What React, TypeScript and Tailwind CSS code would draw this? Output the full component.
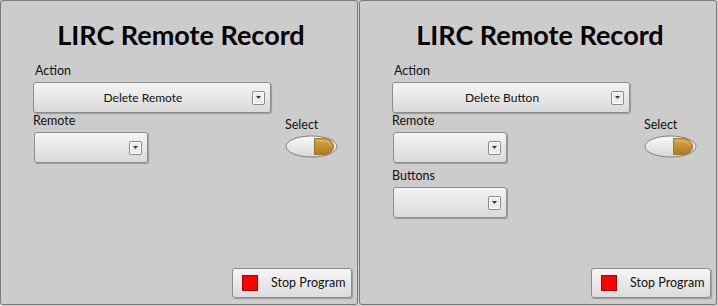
import type { ReactNode } from 'react'

const font = { fontFamily: 'Lato, "Noto Sans", "Liberation Sans", sans-serif' }

function ArrowBox() {
  return (
    <span className="flex h-[14px] w-[13px] items-center justify-center rounded-[2px] border border-[#8a8a8a] bg-[#ececec] shadow-[inset_0_0_0_1px_#ffffff]">
      <svg width="5" height="3" viewBox="0 0 5 3">
        <path d="M0 0 H5 L2.5 3 Z" fill="#3a3a3a" />
      </svg>
    </span>
  )
}

function Ring({ width, text }: { width: string; text?: string }) {
  return (
    <div
      className={`${width} flex h-[31px] items-center rounded-[3px] border border-[#8d8d8d] bg-gradient-to-b from-[#f4f4f4] to-[#dadada] pr-[5px] shadow-[1px_1px_1px_rgba(0,0,0,0.25)]`}
    >
      <span className="flex-1 text-center text-[12px] text-[#111]">{text}</span>
      <ArrowBox />
    </div>
  )
}

function Label({ children, className = '' }: { children: ReactNode; className?: string }) {
  return <div className={`h-4 text-[12.5px] leading-4 text-[#111] ${className}`}>{children}</div>
}

function Toggle() {
  return (
    <svg width="53" height="23" viewBox="0 0 53 23">
      <defs>
        <linearGradient id="tg" x1="0" y1="0" x2="0" y2="1">
          <stop offset="0" stopColor="#f8f8f8" />
          <stop offset="1" stopColor="#d8d8d8" />
        </linearGradient>
        <linearGradient id="gd" x1="0" y1="0" x2="0" y2="1">
          <stop offset="0" stopColor="#d8a545" />
          <stop offset="1" stopColor="#b07a22" />
        </linearGradient>
      </defs>
      <ellipse cx="26.5" cy="11.5" rx="25.5" ry="10.5" fill="url(#tg)" stroke="#7d7d7d" />
      <path d="M29.5 3.5 H38 C45 3.5 48.5 7.5 48.5 11.5 C48.5 15.5 45 19.5 38 19.5 H29.5 Z" fill="url(#gd)" stroke="#8a6420" strokeWidth="0.8" />
      <path d="M31.5 6 H38 C42.5 6 45 8.5 45.5 11" fill="none" stroke="#e6be6e" strokeWidth="1" />
    </svg>
  )
}

function Panel({ action, buttons }: { action: string; buttons?: boolean }) {
  return (
    <div className="flex h-[305px] w-[358px] shrink-0 flex-col rounded-[3px] border border-[#7b7b7b] bg-[#cccccc]">
      <h1 className="mt-[17px] pl-[4px] text-center text-[27px] font-bold leading-[34px] text-black">LIRC Remote Record</h1>
      <div className="mt-[11px] flex">
        <div className="flex w-[283px] shrink-0 flex-col pl-[32px]">
          <Label className="pl-[2px]">Action</Label>
          <div className="mt-[3px]">
            <Ring width="w-[238px]" text={action} />
          </div>
          <Label>Remote</Label>
          <div className="mt-[3px] pl-[1px]">
            <Ring width="w-[114px]" />
          </div>
          {buttons ? (
            <>
              <Label className="mt-[5px]">Buttons</Label>
              <div className="mt-[3px] pl-[1px]">
                <Ring width="w-[114px]" />
              </div>
            </>
          ) : null}
        </div>
        <div className="ml-[1px] flex flex-col pt-[54px]">
          <Label>Select</Label>
          <div className="mt-[2px]">
            <Toggle />
          </div>
        </div>
      </div>
      <div className="mt-auto mb-[6px] flex justify-end pr-[5px]">
        <div className="flex h-[30px] w-[120px] items-center rounded-[3px] border border-[#8d8d8d] bg-gradient-to-b from-[#f6f6f6] to-[#dcdcdc] pl-[9px] shadow-[1px_1px_1px_rgba(0,0,0,0.25)]">
          <span className="h-4 w-4 border border-[#b00000] bg-[#ff0000]" />
          <span className="ml-[13px] text-[12.5px] text-[#111]">Stop Program</span>
        </div>
      </div>
    </div>
  )
}

export default function App() {
  return (
    <div className="flex h-[306px] w-[718px] bg-[#cccccc]" style={font}>
      <Panel action="Delete Remote" />
      <div className="w-px" />
      <Panel action="Delete Button" buttons />
    </div>
  )
}
